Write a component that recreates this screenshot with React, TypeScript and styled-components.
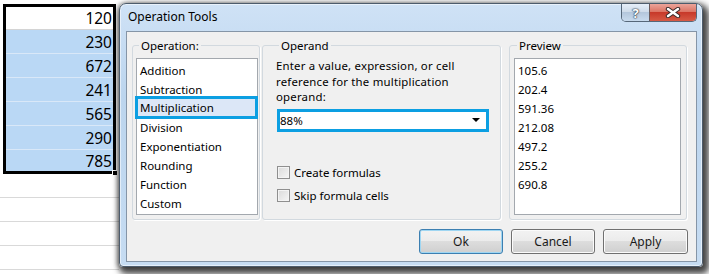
import React from "react";
import styled, { createGlobalStyle } from "styled-components";

const UI_FONT = `"Noto Sans", "Open Sans", "DejaVu Sans", sans-serif`;

const GlobalStyle = createGlobalStyle`
  html, body { margin: 0; padding: 0; }
  body { background: #fff; font-family: ${UI_FONT}; }
  * { box-sizing: border-box; }
`;

const cells = [120, 230, 672, 241, 565, 290, 785];
const operations = [
  "Addition",
  "Subtraction",
  "Multiplication",
  "Division",
  "Exponentiation",
  "Rounding",
  "Function",
  "Custom",
];
const preview = ["105.6", "202.4", "591.36", "212.08", "497.2", "255.2", "690.8"];

const Stage = styled.div`
  position: relative;
  width: 709px;
  height: 274px;
  overflow: hidden;
  background: #fff;
`;

/* spreadsheet behind the dialog */
const Sheet = styled.div`
  display: flex;
  flex-direction: column;
  width: 119px;
  padding-top: 4px;
`;

const Range = styled.div`
  position: relative;
  margin-left: 3px;
  width: 113px;
  border: 3px solid #000;
`;

const Cell = styled.div<{ $selected?: boolean; $h: number; $last?: boolean }>`
  height: ${(p) => p.$h}px;
  display: flex;
  align-items: center;
  justify-content: flex-end;
  padding-right: 1px;
  background: ${(p) => (p.$selected ? "#bad8f5" : "#fff")};
  border-bottom: ${(p) => (p.$last ? "none" : `1px solid ${p.$selected ? "#d9e8f8" : "#d4d4d4"}`)};
  font-family: "Noto Sans", sans-serif;
  font-size: 15.5px;
  color: #000;
`;

const FillHandle = styled.div`
  position: absolute;
  right: -5px;
  bottom: -5px;
  width: 6px;
  height: 6px;
  background: #000;
  border: 1px solid #fff;
`;

const EmptyRow = styled.div`
  height: 24px;
  border-bottom: 1px solid #d9d9d9;
`;

/* dialog window */
const Dialog = styled.div`
  position: absolute;
  left: 119px;
  top: 3px;
  width: 584px;
  height: 264px;
  display: flex;
  flex-direction: column;
  border: 1px solid #4d5c6c;
  border-radius: 7px 7px 4px 4px;
  background: linear-gradient(180deg, #cfe2f6 0%, #bcd5ee 35%, #c6dcf2 100%);
  box-shadow: inset 0 0 0 1px rgba(255, 255, 255, 0.55), 3px 4px 6px 3px rgba(0, 0, 0, 0.72),
    -2px 0 4px rgba(0, 0, 0, 0.3);
`;

const TitleBar = styled.div`
  display: flex;
  align-items: flex-start;
  height: 27px;
  flex-shrink: 0;
`;

const Title = styled.div`
  padding: 5px 0 0 8px;
  font-size: 12px;
  line-height: 16px;
  color: #000;
`;

const CaptionButtons = styled.div`
  display: flex;
  margin-left: auto;
  margin-right: 5px;
  height: 18px;
  border: 1px solid #566779;
  border-top: none;
  border-radius: 0 0 5px 5px;
  overflow: hidden;
`;

const CaptionButton = styled.div<{ $close?: boolean }>`
  width: ${(p) => (p.$close ? 47 : 27)}px;
  display: flex;
  align-items: center;
  justify-content: center;
  border-left: ${(p) => (p.$close ? "1px solid #6b5a5a" : "none")};
  background: ${(p) =>
    p.$close
      ? "linear-gradient(180deg, #eba49a 0%, #dc7565 45%, #c7392a 50%, #d65a45 100%)"
      : "linear-gradient(180deg, #e6eef8 0%, #cfdcea 45%, #b4c7dc 50%, #c9dbee 100%)"};
  color: #fff;
  font: bold 13px ${UI_FONT};
  text-shadow: 0 0 1px #2d3b4a, 0 0 1px #2d3b4a, 0 0 2px #2d3b4a;
`;

const Client = styled.div`
  flex: 1;
  display: flex;
  flex-direction: column;
  margin: 0 5px 4px 6px;
  padding: 6px 8px 7px 5px;
  border: 1px solid #8595a7;
  background: #f0f0f0;
`;

const Groups = styled.div`
  display: flex;
  height: 182px;
`;

const GroupBox = styled.fieldset<{ $w: number; $gap: number; $pad: string }>`
  display: flex;
  flex-direction: column;
  width: ${(p) => p.$w}px;
  margin: 0 ${(p) => p.$gap}px 0 0;
  padding: ${(p) => p.$pad};
  min-width: 0;
  border: 1px solid #d2d9df;
  border-radius: 3px;
  box-shadow: 1px 1px 0 #fff;
`;

const Legend = styled.legend`
  margin-left: 3px;
  padding: 0 2px;
  font-size: 11.5px;
  line-height: 15px;
  color: #000;
`;

const ListBox = styled.div`
  flex: 1;
  padding-top: 2px;
  background: #fff;
  border: 1px solid #a3a8ae;
`;

const ListItem = styled.div<{ $selected?: boolean }>`
  height: ${(p) => (p.$selected ? 23 : 19)}px;
  line-height: ${(p) => (p.$selected ? 17 : 19)}px;
  padding-left: ${(p) => (p.$selected ? 2 : 3)}px;
  margin: ${(p) => (p.$selected ? "-3px -1px -1px -2px" : "0")};
  border: ${(p) => (p.$selected ? "3px solid #0c9fe2" : "none")};
  background: ${(p) => (p.$selected ? "#dce7f7" : "transparent")};
  font-size: 11.5px;
  color: #000;
  white-space: nowrap;
`;

const Prompt = styled.div`
  margin-top: 5px;
  font-size: 11.4px;
  line-height: 15.6px;
  letter-spacing: 0.2px;
  color: #000;
`;

const Combo = styled.div`
  display: flex;
  align-items: center;
  width: 212px;
  height: 23px;
  margin: 4px 0 0 1px;
  padding: 0 6px 0 0;
  border: 3px solid #0c9fe2;
  background: #fff;
  font-size: 11.5px;
  color: #000;
`;

const ComboValue = styled.span`
  flex: 1;
`;

const ComboArrow = styled.span`
  width: 0;
  height: 0;
  border-left: 4px solid transparent;
  border-right: 4px solid transparent;
  border-top: 4px solid #000;
`;

const Checks = styled.div`
  display: flex;
  flex-direction: column;
  gap: 5px;
  margin-top: 32px;
`;

const CheckRow = styled.label`
  display: flex;
  align-items: center;
  gap: 4px;
  height: 18px;
  padding-left: 1px;
  font-size: 11.5px;
  color: #000;
`;

const CheckBox = styled.span`
  width: 13px;
  height: 13px;
  border: 1px solid #8f8f8f;
  background: linear-gradient(135deg, #dadada 0%, #f6f6f6 100%);
  box-shadow: inset 0 0 0 1px #f4f4f4;
`;

const ButtonRow = styled.div`
  display: flex;
  justify-content: flex-end;
  gap: 8px;
  margin-top: 9px;
`;

const Button = styled.button<{ $default?: boolean; $w?: number }>`
  width: ${(p) => p.$w ?? 84}px;
  height: 25px;
  padding: 0;
  border: 1px solid ${(p) => (p.$default ? "#3c7fb1" : "#707070")};
  border-radius: 3px;
  background: linear-gradient(180deg, #f2f2f2 0%, #ebebeb 50%, #dddddd 50%, #cfcfcf 100%);
  box-shadow: inset 0 0 0 1px ${(p) => (p.$default ? "#9fd6f2" : "#fbfbfb")};
  font: 12px ${UI_FONT};
  color: #1a1a1a;
`;

const CloseGlyph = () => (
  <svg width="16" height="11" viewBox="0 0 16 11">
    <path d="M3 2 L13 9 M13 2 L3 9" stroke="#3a2b2b" strokeWidth="4.4" strokeLinecap="round" />
    <path d="M3 2 L13 9 M13 2 L3 9" stroke="#fff" strokeWidth="2.4" strokeLinecap="round" />
  </svg>
);

const App = () => {
  return (
    <Stage>
      <GlobalStyle />
      <Sheet>
        <Range>
          {cells.map((v, i) => (
            <Cell
              key={v}
              $selected={i > 0}
              $last={i === cells.length - 1}
              $h={i === 0 ? 23 : i === cells.length - 1 ? 21 : 24}
            >
              {v}
            </Cell>
          ))}
          <FillHandle />
        </Range>
        <EmptyRow />
        <EmptyRow />
        <EmptyRow />
        <EmptyRow />
      </Sheet>

      <Dialog>
        <TitleBar>
          <Title>Operation Tools</Title>
          <CaptionButtons>
            <CaptionButton>?</CaptionButton>
            <CaptionButton $close>
              <CloseGlyph />
            </CaptionButton>
          </CaptionButtons>
        </TitleBar>
        <Client>
          <Groups>
            <GroupBox $w={128} $gap={2} $pad="5px 1px 4px 3px">
              <Legend>Operation:</Legend>
              <ListBox>
                {operations.map((op) => (
                  <ListItem key={op} $selected={op === "Multiplication"}>
                    {op}
                  </ListItem>
                ))}
              </ListBox>
            </GroupBox>
            <GroupBox $w={239} $gap={8} $pad="0 8px 0 13px">
              <Legend>Operand</Legend>
              <Prompt>
                Enter a value, expression, or cell
                <br />
                reference for the multiplication
                <br />
                operand:
              </Prompt>
              <Combo>
                <ComboValue>88%</ComboValue>
                <ComboArrow />
              </Combo>
              <Checks>
                <CheckRow>
                  <CheckBox />
                  Create formulas
                </CheckRow>
                <CheckRow>
                  <CheckBox />
                  Skip formula cells
                </CheckRow>
              </Checks>
            </GroupBox>
            <GroupBox $w={178} $gap={0} $pad="5px 5px 4px 4px">
              <Legend>Preview</Legend>
              <ListBox>
                {preview.map((v) => (
                  <ListItem key={v}>{v}</ListItem>
                ))}
              </ListBox>
            </GroupBox>
          </Groups>
          <ButtonRow>
            <Button $default>Ok</Button>
            <Button>Cancel</Button>
            <Button $w={85}>Apply</Button>
          </ButtonRow>
        </Client>
      </Dialog>
    </Stage>
  );
};

export default App;
